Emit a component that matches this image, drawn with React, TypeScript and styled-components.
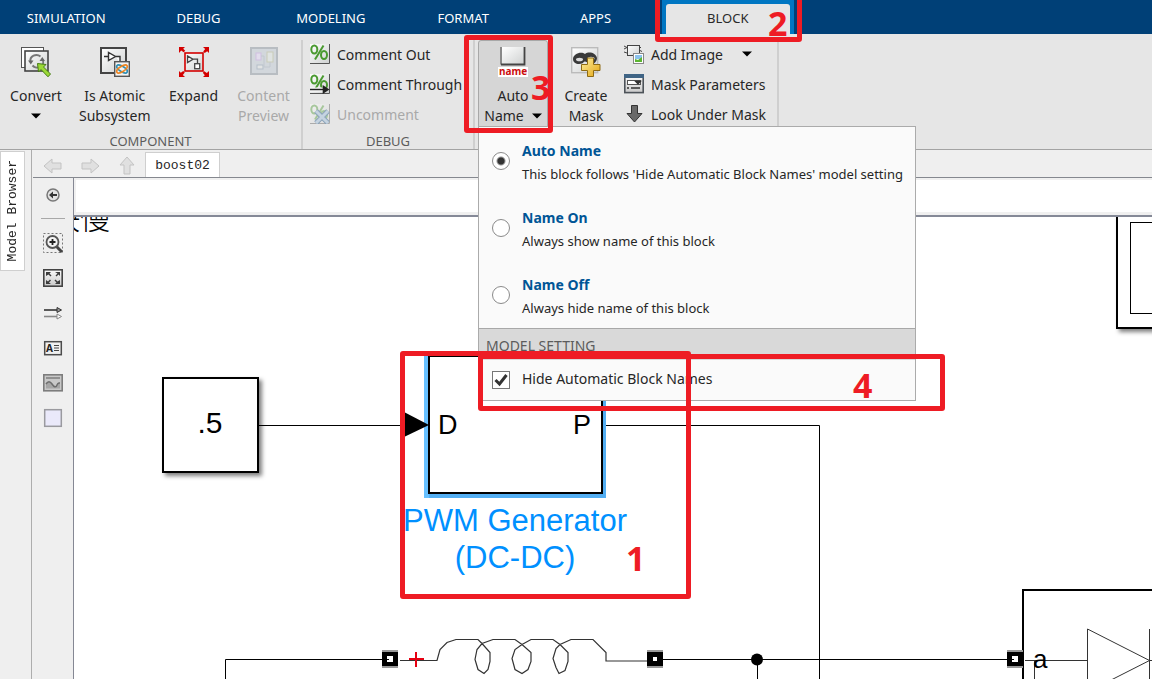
import React from "react";
import styled, { createGlobalStyle, css } from "styled-components";

const ui = `"Noto Sans", "Open Sans", sans-serif`;
const mono = `"Liberation Mono", monospace`;
const red = "#ee1c24";

const GlobalStyle = createGlobalStyle`
  * { box-sizing: border-box; }
  body { margin: 0; font-family: ${ui}; font-size: 14px; color: #262626; background: #efefef; }
  button { font: inherit; color: inherit; background: none; border: 0; padding: 0; margin: 0; cursor: pointer; }
  svg { display: block; }
`;

const Window = styled.div`
  position: relative;
  display: flex;
  flex-direction: column;
  min-height: 100vh;
  overflow: hidden;
`;

/* ---------- tab strip ---------- */
const TabStrip = styled.nav`
  display: flex;
  height: 34px;
  background: #004077;
`;
const Tabs = styled.div`
  display: grid;
  grid-template-columns: repeat(6, 1fr);
  flex: 0 1 794px;
`;
const Tab = styled.button<{ $active?: boolean }>`
  height: 34px;
  padding-top: 2px;
  font-size: 13px;
  color: #fff;
  ${(p) =>
    p.$active &&
    css`
      color: #2a2a2a;
      background: #0076c2;
      padding: 4px 4px 0;
      & > span {
        display: block;
        height: 30px;
        line-height: 28px;
        background: #e6e6e6;
        border-radius: 3px 3px 0 0;
      }
    `}
`;

/* ---------- ribbon ---------- */
const Ribbon = styled.div`
  display: flex;
  height: 116px;
  padding-top: 6px;
  background: #e6e6e6;
  border-bottom: 1px solid #a3a3a3;
`;
const Section = styled.section<{ $width: number }>`
  display: flex;
  flex-direction: column;
  flex: 0 0 auto;
  width: ${(p) => p.$width}px;
  border-right: 2px solid #cfcfcf;
`;
const SectionBody = styled.div<{ $gap?: number; $pad: number }>`
  display: flex;
  flex: 0 0 auto;
  align-items: flex-start;
  gap: ${(p) => p.$gap ?? 0}px;
  height: 93px;
  padding-left: ${(p) => p.$pad}px;
`;
const SectionTitle = styled.h2`
  margin: 0;
  font-size: 13px;
  font-weight: 400;
  line-height: 16px;
  text-align: center;
  color: #5c5c5c;
`;
const BigButton = styled.button<{ $pressed?: boolean }>`
  display: flex;
  flex-direction: column;
  align-items: center;
  min-width: 54px;
  height: 87px;
  padding-top: 7px;
  line-height: 20px;
  white-space: nowrap;
  &:disabled { color: #a9a9a9; }
  & > svg { margin-bottom: 9px; }
  ${(p) =>
    p.$pressed &&
    css`
      width: 70px;
      padding-top: 6px;
      background: #d6d6d6;
      border: 1px solid #a8a8a8;
      border-radius: 3px 3px 0 0;
    `}
`;
const WithCaret = styled.span`
  display: flex;
  align-items: center;
  gap: 8px;
  height: 20px;
`;
const RowList = styled.div`
  display: flex;
  flex-direction: column;
`;
const RowButton = styled.button`
  display: flex;
  align-items: center;
  gap: 7px;
  height: 30px;
  padding-bottom: 2px;
  white-space: nowrap;
  &:disabled { color: #a9a9a9; }
`;
const CaretGap = styled.span`
  margin-left: 12px;
`;
const MenuAnchor = styled.div`
  position: relative;
`;

const Caret = () => (
  <svg width="10" height="6" viewBox="0 0 10 6" aria-hidden="true">
    <path d="M0 0.5h10L5 5.5z" fill="#000" />
  </svg>
);

/* ---------- drop-down menu ---------- */
const Menu = styled.div`
  position: absolute;
  z-index: 5;
  top: 86px;
  left: 0;
  width: 438px;
  background: #fafafa;
  border: 1px solid #ababab;
`;
const Option = styled.label`
  display: flex;
  gap: 12px;
  height: 67px;
  padding: 13px 0 0 13px;
`;
const OptionText = styled.span`
  display: flex;
  flex-direction: column;
  white-space: nowrap;
`;
const OptionTitle = styled.strong`
  line-height: 22px;
  color: #005596;
`;
const OptionNote = styled.span`
  font-size: 13px;
  line-height: 24px;
`;
const Radio = styled.input`
  appearance: none;
  width: 18px;
  height: 18px;
  margin: 12px 0 0;
  border: 1px solid #8a8a8a;
  border-radius: 50%;
  background: #fff;
  &:checked { background: radial-gradient(circle, #333 0 3px, #fff 5px); }
`;
const MenuHeader = styled.div`
  height: 32px;
  padding: 5px 7px;
  border-top: 1px solid #a8a8a8;
  background: #d9d9d9;
  color: #5c5c5c;
  line-height: 24px;
`;
const CheckRow = styled.label`
  display: flex;
  gap: 12px;
  height: 40px;
  padding: 7px 13px;
  line-height: 24px;
`;
const Check = styled.input`
  appearance: none;
  width: 18px;
  height: 18px;
  margin: 4px 0 0;
  border: 1px solid #777;
  background: #fff;
`;
const CheckBox = styled.span`
  position: relative;
  display: block;
  width: 18px;
  & > svg { position: absolute; top: 5px; left: 1px; pointer-events: none; }
`;

/* ---------- workspace ---------- */
const Workspace = styled.div`
  display: flex;
  flex: 1 1 auto;
  background: #efefef;
`;
const SideStrip = styled.aside`
  flex: 0 0 32px;
  padding-top: 1px;
  border-right: 1px solid #adadad;
`;
const SideTab = styled.button`
  display: flex;
  align-items: center;
  justify-content: center;
  width: 25px;
  height: 120px;
  background: #fff;
  border: 1px solid #cfcfcf;
  font-family: ${mono};
  font-size: 13px;
  writing-mode: vertical-rl;
  & > span { transform: rotate(180deg); white-space: nowrap; }
`;
const Editor = styled.main`
  display: flex;
  flex-direction: column;
  flex: 1 1 auto;
  min-width: 0;
  padding-left: 1px;
`;
const DocBar = styled.div`
  display: flex;
  align-items: flex-end;
  height: 28px;
  padding-left: 10px;
  border-bottom: 1px solid #85888f;
`;
const NavButtons = styled.div`
  display: flex;
  gap: 17px;
  padding-bottom: 2px;
  width: 102px;
`;
const DocTab = styled.button`
  width: 75px;
  height: 25px;
  background: #fff;
  border: 1px solid #cfcfcf;
  border-bottom: 0;
  font-family: ${mono};
  font-size: 13px;
`;
const EditorBody = styled.div`
  display: flex;
  flex: 1 1 auto;
`;
const Palette = styled.div`
  display: flex;
  flex-direction: column;
  align-items: center;
  flex: 0 0 41px;
  gap: 15px;
  padding-top: 7px;
  border-right: 1px solid #858894;
`;
const PaletteRule = styled.hr`
  width: 24px;
  margin: -2px 0 -1px;
  border: 0;
  border-top: 1px solid #a8a8a8;
`;
const View = styled.div`
  display: flex;
  flex-direction: column;
  flex: 1 1 auto;
  min-width: 0;
`;
const PathBar = styled.div`
  height: 37px;
  background: #fff;
  border: 2px solid #f0f0f0;
  border-right: 0;
  border-bottom-width: 3px;
`;
const Sheet = styled.div`
  position: relative;
  flex: 1 1 auto;
  min-height: 400px;
  border-top: 2px solid #858997;
  background: #fff;
  overflow: hidden;
  & > svg { position: absolute; top: -2px; left: 0; width: 100%; height: 100%; overflow: visible; }
`;

/* ---------- callouts ---------- */
const Callout = styled.div<{ $x: number; $y: number; $w: number; $h: number }>`
  position: absolute;
  z-index: 10;
  left: ${(p) => p.$x}px;
  top: ${(p) => p.$y}px;
  width: ${(p) => p.$w}px;
  height: ${(p) => p.$h}px;
  border: 5px solid ${red};
  border-radius: 3px;
  pointer-events: none;
`;
const CalloutNumber = styled.span<{ $x: number; $y: number }>`
  position: absolute;
  z-index: 11;
  left: ${(p) => p.$x}px;
  top: ${(p) => p.$y}px;
  font-size: 34px;
  font-weight: 700;
  line-height: 34px;
  color: ${red};
  pointer-events: none;
`;

/* ---------- ribbon icons ---------- */
const DefsSvg = styled.svg`
  position: absolute;
`;
const Defs = () => (
  <DefsSvg width="0" height="0" aria-hidden="true">
    <defs>
      <linearGradient id="paper" x1="0" y1="0" x2="1" y2="1">
        <stop offset="0" stopColor="#fff" />
        <stop offset="1" stopColor="#cfd1d1" />
      </linearGradient>
      <linearGradient id="gold" x1="0" y1="0" x2="1" y2="1">
        <stop offset="0" stopColor="#fff0a0" />
        <stop offset="1" stopColor="#e3a512" />
      </linearGradient>
      <linearGradient id="steel" x1="0" y1="0" x2="0" y2="1">
        <stop offset="0" stopColor="#fcfcfc" />
        <stop offset="1" stopColor="#cacaca" />
      </linearGradient>
      <filter id="shade" x="-20%" y="-20%" width="150%" height="150%">
        <feDropShadow dx="3" dy="3" stdDeviation="2" floodColor="#000" floodOpacity="0.5" />
      </filter>
    </defs>
  </DefsSvg>
);

const ConvertIcon = () => (
  <svg width="30" height="30" viewBox="0 0 30 30">
    <rect x="0.5" y="0.5" width="22" height="20" fill="#fff" stroke="#555" />
    <rect x="4" y="4" width="23" height="20" fill="url(#paper)" stroke="#444" strokeWidth="1.6" />
    <path d="M9.5 14.500a6 5.500 0 0 1 10-5M21.500 12.500a6 5.500 0 0 1-10 6" fill="none" stroke="#777" strokeWidth="2" />
    <path d="M7 13.500h5.500l-2.700 4zM18.500 14h5.500l-2.700-4z" fill="#666" />
    <path d="M16.500 16.500l8.500 1-2.500 2.500 7 7-2.500 2.800-7-7.300-2.500 2.500z" fill="#9bd836" stroke="#467c14" />
  </svg>
);
const AtomicIcon = () => (
  <svg width="30" height="30" viewBox="0 0 30 30">
    <rect x="1" y="1" width="25" height="25" fill="url(#paper)" stroke="#444" strokeWidth="2" />
    <path d="M4 9.500h4M8.500 5.500v8l7-4zM15.500 9.500h4.500v6" fill="#fff" stroke="#333" strokeWidth="1.400" />
    <rect x="14.700" y="14.700" width="14.600" height="14.600" fill="#f4f4f4" stroke="#555" strokeWidth="1.400" />
    <ellipse cx="22" cy="22" rx="6" ry="2.600" transform="rotate(32 22 22)" fill="none" stroke="#2d8eb5" strokeWidth="1.700" />
    <ellipse cx="22" cy="22" rx="6" ry="2.600" transform="rotate(-32 22 22)" fill="none" stroke="#ee8522" strokeWidth="1.700" />
  </svg>
);
const ExpandIcon = () => (
  <svg width="30" height="30" viewBox="0 0 30 30">
    <rect x="6" y="6" width="18" height="18" fill="url(#paper)" stroke="#d40000" strokeWidth="1.600" />
    <path d="M8.500 9v6.500l5.500-3.300zM14 12.200h4.500V17" fill="none" stroke="#444" strokeWidth="1.300" />
    <rect x="15.700" y="16.700" width="5" height="5" fill="#fff" stroke="#444" strokeWidth="1.300" />
    <path d="M0 0h6L4.200 1.800l2 2-1.500 1.500-2.500-1.800L0 6zM30 0v6l-1.800-1.800-2.500 1.800-1.500-1.500 2-2.500L24 0zM0 30v-6l1.800 1.800 2.500-1.800 1.500 1.500-2 2.500L6 30zM30 30h-6l1.800-1.800-2-2.500 1.500-1.500 2.500 1.800L30 24z" fill="#d40000" />
  </svg>
);
const PreviewIcon = () => (
  <svg width="28" height="30" viewBox="0 0 28 30">
    <rect x="1" y="1" width="26" height="26" fill="#d2d7dc" stroke="#b8bdc2" strokeWidth="2" />
    <rect x="6" y="6" width="5" height="7" fill="#e2dcec" stroke="#cfc0e0" />
    <rect x="17" y="5" width="6" height="10" fill="#dfe3e2" stroke="#c9ccb8" />
    <rect x="7" y="18" width="6" height="4" fill="#e2e4e4" stroke="#b5bfc9" />
    <path d="M11 9h3v11M14 20h6v-5" fill="none" stroke="#c2c8cf" />
  </svg>
);
const PercentPlate = ({ faded }: { faded?: boolean }) => (
  <g opacity={faded ? 0.4 : 1}>
    <path d="M0 0h19.500v19.500H0z" fill="url(#paper)" />
    <path d="M19.500 0v19.500H0" fill="none" stroke="#555" />
    <ellipse cx="4.300" cy="5.500" rx="3" ry="4" fill="none" stroke="#4a9a30" strokeWidth="2" />
    <ellipse cx="14" cy="11" rx="3" ry="4" fill="none" stroke="#4a9a30" strokeWidth="2" />
    <path d="M13.500 1.500L5 15.500" stroke="#4a9a30" strokeWidth="2" />
  </g>
);
const CommentOutIcon = () => (
  <svg width="20" height="20" viewBox="0 0 20 20"><PercentPlate /></svg>
);
const CommentThroughIcon = () => (
  <svg width="20" height="20" viewBox="0 0 20 20">
    <PercentPlate />
    <path d="M0 15.500h13" stroke="#fff" strokeWidth="4" />
    <path d="M0 15.500h14M13.500 12.500v6l4.500-3z" stroke="#222" strokeWidth="1.600" fill="#222" />
  </svg>
);
const UncommentIcon = () => (
  <svg width="20" height="20" viewBox="0 0 20 20">
    <PercentPlate faded />
    <path d="M6 7l12 12M18 7L6 19" stroke="#8ba3ba" strokeWidth="5" />
    <path d="M6 7l12 12M18 7L6 19" stroke="#c5d3e0" strokeWidth="3" />
  </svg>
);
const NameIcon = () => (
  <svg width="30" height="30" viewBox="0 0 30 30">
    <path d="M4 0h22v17H4z" fill="url(#paper)" />
    <path d="M3 0v17.500" stroke="#555" strokeWidth="1.200" />
    <path d="M3 17.500h23.500V0" fill="none" stroke="#444" strokeWidth="1.800" />
    <path d="M0 20h30v10H0z" fill="#fff" />
    <text x="15" y="28" textAnchor="middle" fontFamily={ui} fontSize="10" fontWeight="700" fill="#cc0e0e">name</text>
  </svg>
);
const MaskIcon = () => (
  <svg width="30" height="30" viewBox="0 0 30 30">
    <rect x="0.700" y="0.700" width="26" height="25" fill="url(#paper)" stroke="#bbb" strokeWidth="1.400" />
    <path d="M2 12c0-5 8-8 12-5 4-3 11-1 12 4 0 5-6 8-9 5-2-2-4-2-5 0-4 2-10 1-10-4z" fill="#3a3a3a" />
    <ellipse cx="8.500" cy="12.500" rx="3.500" ry="1.800" fill="#ddd" />
    <ellipse cx="20" cy="11.500" rx="3.500" ry="1.800" fill="#ddd" />
    <path d="M16.500 11h6v6.500H29v6h-6.500v6h-6v-6H10.500v-6h6z" fill="url(#gold)" stroke="#8d6a14" />
  </svg>
);
const AddImageIcon = () => (
  <svg width="20" height="20" viewBox="0 0 20 20">
    <rect x="3.500" y="1.500" width="12" height="10" fill="url(#paper)" stroke="#444" />
    <path d="M0 2l3 1.500L0 5M0 8l3 1M16 3.500h1M16 6.500l2 1" fill="none" stroke="#444" />
    <rect x="9.500" y="9.500" width="10" height="10" fill="#fff" stroke="#888" />
    <path d="M11 11h7v4h-7z" fill="#8ac2ed" />
    <path d="M11 18v-3l3 1 4-3v5z" fill="#5cb531" />
  </svg>
);
const ParametersIcon = () => (
  <svg width="20" height="20" viewBox="0 0 20 20">
    <rect x="0.800" y="0.800" width="18.400" height="17.800" fill="url(#steel)" stroke="#4d5359" strokeWidth="1.600" />
    <path d="M0 0h20v4H0z" fill="#3f6485" />
    <rect x="3.500" y="6.500" width="13" height="4" fill="#fff" stroke="#555" />
    <path d="M12 7.500h4l-2 2zM3 14h2M7 14h9" fill="#333" stroke="#333" strokeWidth="1.600" />
  </svg>
);
const LookUnderIcon = () => (
  <svg width="20" height="20" viewBox="0 0 20 20">
    <path d="M7.500 1.500h6v8h4.500L10.500 18 3 9.500h4.500z" fill="#696969" stroke="#333" />
  </svg>
);

/* ---------- editor icons ---------- */
const NavArrow = ({ turn }: { turn: number }) => (
  <svg width="20" height="18" viewBox="0 0 20 18" aria-hidden="true">
    <path d="M1 9l8-7v4h9v6H9v4z" fill="#e0e0e0" stroke="#c3c3c3" transform={`rotate(${turn} 10 9)`} />
  </svg>
);
const BackIcon = () => (
  <svg width="20" height="20" viewBox="0 0 20 20">
    <circle cx="10" cy="10" r="6" fill="#e2e2e2" stroke="#777" strokeWidth="1.500" />
    <path d="M6 10l4-3.500v2.500h4v2h-4v2.500z" fill="#333" />
  </svg>
);
const ZoomIcon = () => (
  <svg width="20" height="20" viewBox="0 0 20 20">
    <rect x="0.500" y="0.500" width="19" height="19" fill="none" stroke="#777" strokeDasharray="2 2" />
    <path d="M13 13l6 6" stroke="#444" strokeWidth="3" />
    <circle cx="9.500" cy="9" r="6" fill="#f4f4f4" stroke="#555" strokeWidth="1.800" />
    <path d="M9.500 6v6M6.500 9h6" stroke="#222" strokeWidth="1.800" />
  </svg>
);
const FitIcon = () => (
  <svg width="20" height="20" viewBox="0 0 20 20">
    <rect x="0.800" y="1.800" width="18.400" height="16.400" fill="url(#steel)" stroke="#444" strokeWidth="1.600" />
    <path d="M3 4h5L6.500 5.500l2 2-1 1-2-2L3 8zM17 4v4l-1.500-1.500-2 2-1-1 2-2L12 4zM3 16v-4l2 1.500 2-2 1 1-2 2L8 16zM17 16h-5l1.500-1.500-2-2 1-1 2 2L17 12z" fill="#3c3c3c" />
  </svg>
);
const SignalIcon = () => (
  <svg width="20" height="20" viewBox="0 0 20 20">
    <path d="M1 7h14" stroke="#333" strokeWidth="1.600" />
    <path d="M14 4.500l4.500 2.500-4.500 2.500z" fill="#999" stroke="#333" />
    <path d="M1 13.500h14" stroke="#888" strokeWidth="1.600" />
    <path d="M14 11l4.500 2.500-4.500 2.500z" fill="#fff" stroke="#888" />
  </svg>
);
const TextIcon = () => (
  <svg width="20" height="20" viewBox="0 0 20 20">
    <rect x="1.700" y="3.700" width="16.600" height="13" fill="#f0f0f0" stroke="#4c4c4c" strokeWidth="1.500" />
    <text x="3" y="13.500" fontFamily={ui} fontSize="10" fontWeight="700" fill="#222">A</text>
    <path d="M11 7.500h5M11 10h5M11 12.500h5" stroke="#444" />
  </svg>
);
const ImageIcon = () => (
  <svg width="20" height="20" viewBox="0 0 20 20">
    <rect x="0.800" y="1.800" width="18.400" height="16" fill="#c8c8c8" stroke="#7d7d7d" strokeWidth="1.600" />
    <path d="M3 5h14" stroke="#909090" strokeWidth="2" />
    <path d="M3 11c2-3 4-3 6 0s4 4 5 1 2-2 3-2v5.500H3z" fill="#a6a6a6" />
    <path d="M3 11c2-3 4-3 6 0s4 4 5 1 2-2 3-2" fill="none" stroke="#6d6d6d" strokeWidth="1.500" />
  </svg>
);
const AreaIcon = () => (
  <svg width="20" height="20" viewBox="0 0 20 20">
    <rect x="1.700" y="1.700" width="16.600" height="16.600" fill="#eae9fa" stroke="#9a9a9f" strokeWidth="1.500" />
  </svg>
);

/* ---------- block diagram ---------- */
const Port = ({ x, open }: { x: number; open?: boolean }) => (
  <g>
    <path d={`M${x} 435h16v18h-16z`} fill="#999" />
    <path d={`M${x} 437h16v14h-16z`} fill="#000" />
    <path d={open ? `M${x + 5} 441h6v6h-6z` : `M${x + 6} 442h4v4h-4z`} fill="#fff" />
    {open && <path d={`M${x + 5} 444.500h2`} stroke="#000" />}
  </g>
);
const Diagram = () => (
  <svg fontFamily='"Liberation Sans", Arial, sans-serif' role="img" aria-label="boost02 block diagram">
    <text x="-24" y="14" fontFamily='"Noto Sans CJK SC", sans-serif' fontSize="30" fontWeight="300">快慢</text>

    <g fill="#fff" stroke="#000" strokeWidth="2">
      <rect x="1043" y="-20" width="200" height="133" filter="url(#shade)" />
      <rect x="1056.500" y="7.500" width="200" height="91" strokeWidth="1" />
      <rect x="949" y="375" width="200" height="200" />
      <rect x="89" y="163" width="95" height="94" filter="url(#shade)" />
    </g>
    <path
      d="M185 210.500h145M529 210.500h216.500v300M151.500 510V444.500h163M589 444.500h350M683.500 445v80"
      fill="none"
      stroke="#000"
    />
    <circle cx="683" cy="444.500" r="6" />

    <path d="M350 138h182v145H350z" fill="#53aef2" />
    <path d="M350 138h5v145h-5z" fill="#66c0ff" />
    <rect x="355" y="141" width="173" height="137" fill="#fff" stroke="#000" strokeWidth="2" />
    <path d="M330 197l25 13-25 12z" />
    <text x="136" y="218" fontSize="30" textAnchor="middle">.5</text>
    <text x="364" y="219" fontSize="27">D</text>
    <text x="499" y="219" fontSize="27">P</text>
    <g fontSize="31" textAnchor="middle" fill="#0090ff">
      <text x="441" y="316">PWM Generator</text>
      <text x="441" y="353">(DC-DC)</text>
    </g>

    <path
      d="M326 445.500h37l3-11 7-7 9-3h22l4 4 8 9v9l-2 8-4 4-6-4-3-10 2-10 5-6 11-4h22l7 5 9 8v9l-3 8-6 4-7-4-3-11 3-9 7-5 9-5h22l7 5 8 8v9l-3 9-6 3-3-6-3-9 3-10 4-4 11-5h22l13 13v8.500h41"
      fill="none"
      stroke="#333"
      strokeWidth="1.200"
    />
    <path d="M335 444h15M342 437v15" stroke="#e60012" strokeWidth="2" />
    <Port x={308} open />
    <Port x={573} />
    <Port x={933} open />
    <path d="M951 445.500h62M960.500 446v40M1013.500 414v63l62-31.500zM1075.500 414v63M1075 445.500h10" fill="none" stroke="#333" />
    <text x="959" y="453" fontSize="26">a</text>
  </svg>
);

const options = [
  { title: "Auto Name", note: "This block follows 'Hide Automatic Block Names' model setting" },
  { title: "Name On", note: "Always show name of this block" },
  { title: "Name Off", note: "Always hide name of this block" },
];

export default function App() {
  return (
    <Window>
      <GlobalStyle />
      <Defs />
      <TabStrip>
        <Tabs>
          {["SIMULATION", "DEBUG", "MODELING", "FORMAT", "APPS", "BLOCK"].map((t) => (
            <Tab key={t} $active={t === "BLOCK"}><span>{t}</span></Tab>
          ))}
        </Tabs>
      </TabStrip>

      <Ribbon>
        <Section $width={303}>
          <SectionBody $gap={16} $pad={9}>
            <BigButton><ConvertIcon />Convert<WithCaret><Caret /></WithCaret></BigButton>
            <BigButton><AtomicIcon /><span>Is Atomic</span><span>Subsystem</span></BigButton>
            <BigButton><ExpandIcon />Expand</BigButton>
            <BigButton disabled><PreviewIcon /><span>Content</span><span>Preview</span></BigButton>
          </SectionBody>
          <SectionTitle>COMPONENT</SectionTitle>
        </Section>
        <Section $width={172}>
          <SectionBody $pad={7}>
            <RowList>
              <RowButton><CommentOutIcon />Comment Out</RowButton>
              <RowButton><CommentThroughIcon />Comment Through</RowButton>
              <RowButton disabled><UncommentIcon />Uncomment</RowButton>
            </RowList>
          </SectionBody>
          <SectionTitle>DEBUG</SectionTitle>
        </Section>
        <Section $width={304}>
          <SectionBody $gap={11} $pad={3}>
            <MenuAnchor>
              <BigButton $pressed aria-expanded="true">
                <NameIcon />
                <span>Auto</span>
                <WithCaret>Name<Caret /></WithCaret>
              </BigButton>
              <Menu>
                {options.map((o, i) => (
                  <Option key={o.title}>
                    <Radio type="radio" name="naming" defaultChecked={i === 0} />
                    <OptionText>
                      <OptionTitle>{o.title}</OptionTitle>
                      <OptionNote>{o.note}</OptionNote>
                    </OptionText>
                  </Option>
                ))}
                <MenuHeader>MODEL SETTING</MenuHeader>
                <CheckRow>
                  <CheckBox>
                    <Check type="checkbox" defaultChecked />
                    <svg width="16" height="16" viewBox="0 0 16 16" aria-hidden="true">
                      <path d="M2.500 8l4 4 7-9" fill="none" stroke="#333" strokeWidth="3" />
                    </svg>
                  </CheckBox>
                  Hide Automatic Block Names
                </CheckRow>
              </Menu>
            </MenuAnchor>
            <BigButton><MaskIcon /><span>Create</span><span>Mask</span></BigButton>
            <RowList>
              <RowButton><AddImageIcon />Add Image<CaretGap><Caret /></CaretGap></RowButton>
              <RowButton><ParametersIcon />Mask Parameters</RowButton>
              <RowButton><LookUnderIcon />Look Under Mask</RowButton>
            </RowList>
          </SectionBody>
        </Section>
      </Ribbon>

      <Workspace>
        <SideStrip>
          <SideTab><span>Model Browser</span></SideTab>
        </SideStrip>
        <Editor>
          <DocBar>
            <NavButtons>
              <NavArrow turn={0} />
              <NavArrow turn={180} />
              <NavArrow turn={90} />
            </NavButtons>
            <DocTab>boost02</DocTab>
          </DocBar>
          <EditorBody>
            <Palette>
              <BackIcon />
              <PaletteRule />
              <ZoomIcon />
              <FitIcon />
              <SignalIcon />
              <TextIcon />
              <ImageIcon />
              <AreaIcon />
            </Palette>
            <View>
              <PathBar />
              <Sheet><Diagram /></Sheet>
            </View>
          </EditorBody>
        </Editor>
      </Workspace>

      <Callout $x={400} $y={351} $w={291} $h={248} />
      <Callout $x={655} $y={-6} $w={147} $h={48} />
      <Callout $x={464} $y={35} $w={89} $h={98} />
      <Callout $x={478} $y={354} $w={467} $h={57} />
      <CalloutNumber $x={626} $y={541}>1</CalloutNumber>
      <CalloutNumber $x={768} $y={6}>2</CalloutNumber>
      <CalloutNumber $x={531} $y={70}>3</CalloutNumber>
      <CalloutNumber $x={853} $y={368}>4</CalloutNumber>
    </Window>
  );
}
